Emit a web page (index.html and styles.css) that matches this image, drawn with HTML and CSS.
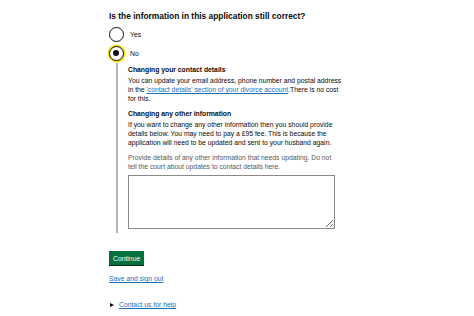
FILE: index.html
```html
<!DOCTYPE html>
<html lang="en">
<head>
  <meta charset="UTF-8">
  <meta name="viewport" content="width=device-width, initial-scale=1.0">
  <title>Check your application</title>
  <link rel="stylesheet" href="styles.css">
</head>
<body>
  <main class="page">
    <form class="question">
      <h1 class="question-title">Is the information in this application still correct?</h1>

      <div class="radios">
        <label class="radio">
          <span class="radio-circle"></span>
          <span class="radio-label">Yes</span>
        </label>
        <label class="radio radio--checked">
          <span class="radio-circle"></span>
          <span class="radio-label">No</span>
        </label>

        <div class="conditional">
          <h2 class="sub-heading">Changing your contact details</h2>
          <p class="body-text">You can update your email address, phone number and postal address in the <a href="#" class="link">'contact details' section of your divorce account</a>.There is no cost for this.</p>

          <h2 class="sub-heading sub-heading--spaced">Changing any other information</h2>
          <p class="body-text">If you want to change any other information then you should provide details below. You may need to pay a £95 fee. This is because the application will need to be updated and sent to your husband again.</p>

          <p class="hint">Provide details of any other information that needs updating. Do not tell the court about updates to contact details here.</p>
          <textarea class="textarea" rows="5"></textarea>
        </div>
      </div>

      <button type="button" class="button">Continue</button>
      <a href="#" class="link save-link">Save and sign out</a>

      <div class="details">
        <span class="details-arrow"></span>
        <a href="#" class="link">Contact us for help</a>
      </div>
    </form>
  </main>
</body>
</html>
```

FILE: styles.css
```css
body {
  margin: 0;
  background: #fff;
  color: #0b0c0c;
  font-family: "Liberation Sans", Arial, sans-serif;
  font-size: 6.8px;
  line-height: 9px;
}
.page {
  width: 256px;
  margin: 0 auto;
  padding-top: 11px;
}
.question-title {
  margin: 0 0 5px;
  font-size: 8.4px;
  line-height: 11px;
  font-weight: 700;
}
.radios {
  display: flex;
  flex-direction: column;
  gap: 4px;
}
.radio {
  display: flex;
  align-items: center;
  gap: 6px;
}
.radio-circle {
  box-sizing: border-box;
  width: 15px;
  height: 15px;
  border: 1px solid #0b0c0c;
  border-radius: 50%;
  background: #fff;
  position: relative;
}
.radio--checked .radio-circle {
  border-width: 1.5px;
  box-shadow: 0 0 0 1.5px #ffdd00;
}
.radio--checked .radio-circle::after {
  content: "";
  position: absolute;
  left: 3px;
  top: 3px;
  width: 6px;
  height: 6px;
  border-radius: 50%;
  background: #0b0c0c;
}
.conditional {
  margin: -2px 0 0 7px;
  padding: 2px 0 4px 10px;
  border-left: 2px solid #b1b4b6;
}
.sub-heading {
  margin: 0 0 2px;
  font-size: 6.8px;
  line-height: 9px;
  font-weight: 700;
}
.sub-heading--spaced {
  margin-top: 6px;
}
.body-text {
  margin: 0;
  width: 218px;
}
.link {
  color: #1d70b8;
  text-decoration: underline;
  text-decoration-thickness: 0.5px;
  text-underline-offset: 1px;
}
.hint {
  margin: 6px 0 4px;
  width: 208px;
  color: #505a5f;
}
.textarea {
  display: block;
  box-sizing: border-box;
  width: 207px;
  height: 54px;
  margin: 0;
  border: 1px solid #8a8a8a;
  font: inherit;
}
.button {
  display: block;
  margin: 18px 0 9px;
  padding: 3px 4px 2px;
  border: 0;
  border-radius: 0;
  background: #00703c;
  box-shadow: 0 1px 0 #002d18;
  color: #fff;
  font-family: inherit;
  font-size: 6.8px;
  line-height: 9px;
}
.save-link {
  display: inline-block;
}
.details {
  display: flex;
  align-items: center;
  gap: 5px;
  margin-top: 17px;
  padding-left: 1px;
}
.details-arrow {
  width: 0;
  height: 0;
  border-top: 2.5px solid transparent;
  border-bottom: 2.5px solid transparent;
  border-left: 4px solid #0b0c0c;
}
```
